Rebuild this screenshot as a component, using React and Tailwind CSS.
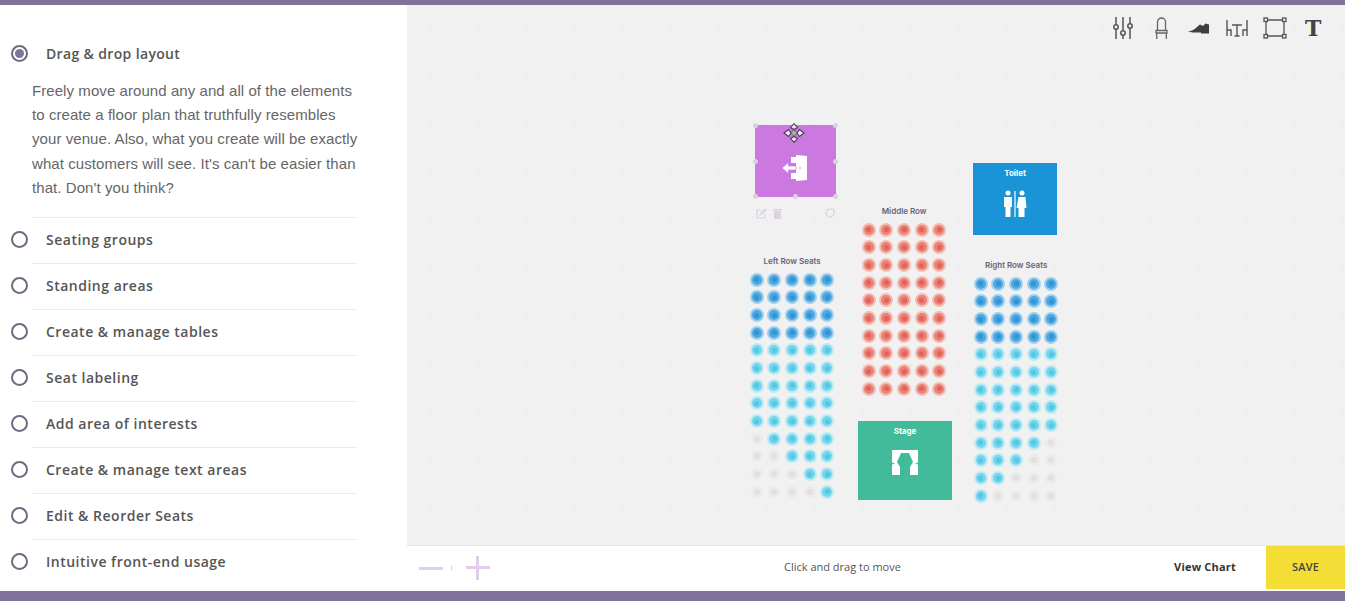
const items = [
  "Seating groups",
  "Standing areas",
  "Create & manage tables",
  "Seat labeling",
  "Add area of interests",
  "Create & manage text areas",
  "Edit & Reorder Seats",
  "Intuitive front-end usage",
];

// b = blue, c = cyan, r = red, g = empty (grey)
const leftRows = ["bbbbb", "bbbbb", "bbbbb", "bbbbb", "ccccc", "ccccc", "ccccc", "ccccc", "ccccc", "gcccc", "ggccc", "gggcc", "ggggc"];
const middleRows = Array(10).fill("rrrrr");
const rightRows = ["bbbbb", "bbbbb", "bbbbb", "bbbbb", "ccccc", "ccccc", "ccccc", "ccccc", "ccccc", "ccccg", "cccgg", "ccggg", "cgggg"];

const seatColors = {
  b: ["bg-[#9dd0ef]", "bg-[#4ea8e0]", "bg-[#3593d2]"],
  c: ["bg-[#bdebf5]", "bg-[#74d5ec]", "bg-[#58c6e0]"],
  r: ["bg-[#f4bdb4]", "bg-[#ea8278]", "bg-[#e0635a]"],
};

function Seat({ kind }) {
  if (kind === "g") {
    return (
      <div className="flex h-[12px] w-[12px] items-center justify-center rounded-full bg-[#ecebeb]">
        <div className="h-[6px] w-[6px] rounded-full bg-[#e2e0e0]" />
      </div>
    );
  }
  const [outer, mid, core] = seatColors[kind];
  return (
    <div className={`flex h-[14px] w-[14px] items-center justify-center rounded-full ${outer}`}>
      <div className={`flex h-[10px] w-[10px] items-center justify-center rounded-full ${mid}`}>
        <div className={`h-[5px] w-[5px] rounded-full ${core}`} />
      </div>
    </div>
  );
}

function SeatBlock({ title, rows, className }) {
  return (
    <div className={`absolute flex flex-col items-center ${className}`}>
      <div className="mb-[5px] h-[10px] text-[8px] leading-[10px] font-semibold text-[#66647a] font-['Inter',sans-serif]">{title}</div>
      <div className="grid grid-cols-[repeat(5,17.67px)] auto-rows-[17.67px]">
        {rows.flatMap((row, i) =>
          row.split("").map((kind, j) => (
            <div key={`${i}-${j}`} className="flex items-center justify-center">
              <Seat kind={kind} />
            </div>
          ))
        )}
      </div>
    </div>
  );
}

function Radio({ active }) {
  return (
    <div className="flex h-[17px] w-[17px] shrink-0 items-center justify-center rounded-full border-2 border-[#6f6a80]">
      {active && <div className="h-[9px] w-[9px] rounded-full bg-[#7f7399]" />}
    </div>
  );
}

function SlidersIcon() {
  return (
    <svg width="20" height="22" viewBox="0 0 20 22" fill="none" stroke="#555" strokeWidth="1.5">
      <path d="M3 0v22M10 0v22M17 0v22" />
      <circle cx="3" cy="10" r="2.200" fill="#f1f1f1" />
      <circle cx="10" cy="16" r="2.200" fill="#f1f1f1" />
      <circle cx="17" cy="9" r="2.200" fill="#f1f1f1" />
    </svg>
  );
}

function ChairIcon() {
  return (
    <svg width="13" height="22" viewBox="0 0 13 22" fill="none" stroke="#666" strokeWidth="1.3">
      <path d="M2.500 13V5a4 4 0 0 1 8 0v8" />
      <path d="M1 13.500h11v2.500H1z" />
      <path d="M1.700 16v6M11.300 16v6" />
    </svg>
  );
}

function ShoeIcon() {
  return (
    <svg width="22" height="11" viewBox="0 0 22 11" fill="#3f3f3f">
      <path d="M0 8.500C3 8 6 7 9 4l3-2.500L15 3l2.500-2.500L21 1.500v9h-8v-1H5z" />
    </svg>
  );
}

function TableIcon() {
  return (
    <svg width="22" height="20" viewBox="0 0 22 20" fill="none" stroke="#555" strokeWidth="1.4">
      <path d="M1 2v16M1 12h4v6" />
      <path d="M21 2v16M21 12h-4v6" />
      <path d="M6 7h10M11 7v11M8.500 18h5" />
    </svg>
  );
}

function FrameIcon() {
  return (
    <svg width="24" height="22" viewBox="0 0 24 22" fill="none" stroke="#555" strokeWidth="1.300">
      <path d="M4 3h16M4 19h16M3 4.500v13M21 4.500v13" />
      <rect x="1" y="1" width="3.500" height="3.500" fill="#f1f1f1" />
      <rect x="19.500" y="1" width="3.500" height="3.500" fill="#f1f1f1" />
      <rect x="1" y="17.500" width="3.500" height="3.500" fill="#f1f1f1" />
      <rect x="19.500" y="17.500" width="3.500" height="3.500" fill="#f1f1f1" />
    </svg>
  );
}

function ExitIcon() {
  return (
    <svg width="26" height="26" viewBox="0 0 26 26" fill="#fff">
      <path d="M14 0l11 1v24l-11 1z" />
      <path d="M9 2h5v6H9zM9 18h5v6H9z" />
      <path d="M0 13l6.500-5.500V11H14v4H6.500v3.500z" stroke="#cb79e0" strokeWidth="0.7" />
      <circle cx="18" cy="13" r="0.800" fill="#cb79e0" />
    </svg>
  );
}

function PeopleIcon() {
  return (
    <svg width="24" height="28" viewBox="0 0 24 28" fill="#fff">
      <circle cx="5" cy="3" r="2.500" />
      <path d="M1 7h8v10H7.500v10h-5V17H1z" />
      <path d="M11.400 1h1.200v26h-1.200z" />
      <circle cx="19" cy="3" r="2.500" />
      <path d="M15.500 7h7l1 11h-2v9h-6v-9h-2z" />
    </svg>
  );
}

function StageIcon() {
  return (
    <svg width="26" height="25" viewBox="0 0 26 25">
      <path d="M0 0h26v25H0z" fill="#fff" />
      <path d="M9 3h8l4 9-3 5v8H8v-8l-3-5zM0 12.500l3 1-3 1zM26 12.500l-3 1 3 1z" fill="#42bb9a" />
    </svg>
  );
}

function MoveIcon() {
  return (
    <svg width="22" height="20" viewBox="0 0 22 20" fill="#eee8f0" stroke="#443f4c" strokeWidth="1.100">
      <path d="M11 .7l3.500 3.800L11 6.500 7.500 4.500zM11 19.300l3.500-3.800-3.500-2-3.500 2zM1 10l4.500-3.500L8 10l-2.500 3.500zM21 10l-4.500-3.500L14 10l2.500 3.500z" />
      <circle cx="11" cy="10" r="2.500" fill="#aab3a8" strokeWidth="0.500" />
    </svg>
  );
}

function SmallTools() {
  return (
    <div className="absolute left-[349px] top-[203px] flex h-[11px] w-[80px] items-center text-[#ded2e2]">
      <svg width="11" height="11" viewBox="0 0 11 11" fill="none" stroke="currentColor" strokeWidth="1.200">
        <path d="M9 6v4H1V2h4M4 7l1-2 4-4 1 1-4 4z" />
      </svg>
      <svg className="ml-[6px]" width="9" height="11" viewBox="0 0 9 11" fill="currentColor">
        <path d="M0 1h9v1.500H0zM1 3h7v8H1z" />
      </svg>
      <svg className="ml-auto" width="11" height="11" viewBox="0 0 11 11" fill="none" stroke="currentColor" strokeWidth="1.200">
        <path d="M9 4a4 4 0 1 1-2-2.500M6 1l3 .5L8.500 4" />
      </svg>
    </div>
  );
}

function Handle({ className }) {
  return <div className={`absolute h-[5px] w-[5px] rounded-full bg-[#d8d3da] ${className}`} />;
}

export default function App() {
  return (
    <div className="h-[602px] w-full overflow-hidden bg-white font-['Liberation_Sans',sans-serif]">
      <div className="h-[5px] w-[1345px] bg-[#7f7399]" />
      <div className="flex h-[586px] w-[1345px]">
        <aside className="w-[407px] shrink-0 bg-white">
          <div className="flex h-[96px] items-center gap-[18px] pl-[11px]">
            <Radio active />
            <span className="text-[14px] font-semibold tracking-[0.35px] text-[#555] font-['Open_Sans',sans-serif]">Drag &amp; drop layout</span>
          </div>
          <p className="-mt-[22px] w-[362px] pl-[32px] text-[15px] leading-[24.2px] tracking-[0.07px] text-[#666]">
            Freely move around any and all of the elements to create a floor plan that truthfully resembles your venue. Also, what you create will be exactly what customers will see. It's can't be easier than that. Don't you think?
          </p>
          <ul className="mt-[17px]">
            {items.map((item) => (
              <li key={item} className="relative flex h-[46px] items-center gap-[18px] pb-[2px] pl-[11px]">
                <div className="absolute left-[32px] right-[50px] top-0 h-px bg-[#ebebeb]" />
                <Radio />
                <span className="text-[14px] font-semibold tracking-[0.5px] text-[#555] font-['Open_Sans',sans-serif]">{item}</span>
              </li>
            ))}
          </ul>
        </aside>
        <main className="flex min-w-0 flex-1 flex-col">
          <div className="relative flex-1 bg-[#f1f1f1] bg-[radial-gradient(circle,#e9e9e9_1px,transparent_1.500px)] bg-[size:48px_48px]">
            <div className="absolute left-[706px] top-[11px] flex h-[24px] items-center">
              <SlidersIcon />
              <div className="ml-[22px]">
                <ChairIcon />
              </div>
              <div className="ml-[20px]">
                <ShoeIcon />
              </div>
              <div className="ml-[16px]">
                <TableIcon />
              </div>
              <div className="ml-[15px]">
                <FrameIcon />
              </div>
              <span className="ml-[18px] text-[22px] leading-none font-bold text-[#444] font-['DejaVu_Serif',serif]">T</span>
            </div>

            {/* exit block */}
            <div className="absolute left-[348px] top-[120px] flex h-[72px] w-[81px] items-center justify-center bg-[#cb79e0]">
              <div className="mr-[2px] mt-[14px] shrink-0">
                <ExitIcon />
              </div>
              <Handle className="-left-[2px] -top-[2px]" />
              <Handle className="-right-[2px] -top-[2px]" />
              <Handle className="-left-[2px] top-[34px]" />
              <Handle className="-right-[2px] top-[34px]" />
              <Handle className="-left-[2px] -bottom-[2px]" />
              <Handle className="left-[38px] -bottom-[2px]" />
              <Handle className="-right-[2px] -bottom-[2px]" />
              <div className="absolute left-[28px] -top-[2px]">
                <MoveIcon />
              </div>
            </div>
            <SmallTools />

            {/* toilet */}
            <div className="absolute left-[566px] top-[158px] flex h-[72px] w-[84px] flex-col items-center bg-[#1a94d6]">
              <div className="mt-[5px] text-[8px] leading-[10px] font-bold text-white font-['Inter',sans-serif]">Toilet</div>
              <div className="mt-[12px]">
                <PeopleIcon />
              </div>
            </div>

            {/* stage */}
            <div className="absolute left-[451px] top-[416px] flex h-[79px] w-[94px] flex-col items-center bg-[#42bb9a]">
              <div className="mt-[5px] text-[8px] leading-[10px] font-bold text-white font-['Inter',sans-serif]">Stage</div>
              <div className="mt-[14px]">
                <StageIcon />
              </div>
            </div>

            <SeatBlock title="Left Row Seats" rows={leftRows} className="left-[341px] top-[251px]" />
            <SeatBlock title="Middle Row" rows={middleRows} className="left-[453px] top-[201px]" />
            <SeatBlock title="Right Row Seats" rows={rightRows} className="left-[565px] top-[255px]" />
          </div>

          <div className="flex h-[46px] items-start border-t border-[#e8e8e8] bg-white">
            <div className="mt-[10px] flex w-[82px] items-center pl-[12px]">
              <div className="h-[3px] w-[24px] bg-[#e4cdea]" />
              <div className="ml-[8px] h-[4px] w-px bg-[#d8c8dc]" />
              <div className="relative ml-[14px] h-[24px] w-[24px]">
                <div className="absolute left-0 top-[10px] h-[3px] w-[24px] bg-[#e4cdea]" />
                <div className="absolute left-[10px] top-0 h-[24px] w-[3px] bg-[#e4cdea]" />
              </div>
            </div>
            <div className="mt-[13px] ml-[295px] text-[11px] leading-[15px] text-[#555] font-['Open_Sans',sans-serif]">Click and drag to move</div>
            <div className="mt-[13px] ml-auto mr-[30px] text-[11px] leading-[15px] font-bold tracking-[0.2px] text-[#333] font-['Open_Sans',sans-serif]">View Chart</div>
            <div className="flex h-[43px] w-[79px] items-center justify-center bg-[#f3dd36] text-[11px] font-semibold tracking-[0.2px] text-[#444] font-['Open_Sans',sans-serif]">SAVE</div>
          </div>
        </main>
      </div>
      <div className="h-[10px] w-[1345px] bg-[#7f7399]" />
    </div>
  );
}
